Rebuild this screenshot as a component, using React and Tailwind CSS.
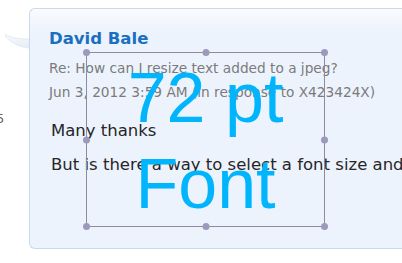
import React from "react";

function Handle({ className }) {
  return <div className={"absolute h-[7px] w-[7px] rounded-full bg-[#9d99bb] " + className} />;
}

export default function App() {
  return (
    <div className="flex h-[263px] w-[402px] overflow-hidden bg-white font-['DejaVu_Sans',sans-serif]">
      <div className="flex w-[29px] shrink-0 flex-col">
        <svg className="ml-[5px] mt-[33px]" width="24" height="16" viewBox="0 0 24 16">
          <defs>
            <linearGradient id="tg" x1="0" y1="0" x2="0" y2="1">
              <stop offset="0" stopColor="#f7fafd" />
              <stop offset="1" stopColor="#e4edf5" />
            </linearGradient>
          </defs>
          <path d="M0 1 C6 5 14 6 24 6 L24 15 C14 14 6 10 0 3 Z" fill="url(#tg)" stroke="#dde7f0" strokeWidth="0.8" />
        </svg>
        <div className="ml-[-4px] mt-[62px] text-[13px] leading-[16px] text-[#666]">5</div>
      </div>
      <div className="relative mt-[8px] h-[241px] w-[400px] shrink-0 rounded-l-[6px] border border-r-0 border-[#c9dbea] bg-[linear-gradient(to_bottom,#f9fbfe,#edf3fd_22px)] pl-[19px] pt-[20px]">
        <div className="text-[16.5px] font-bold leading-[20px] text-[#1a70c0]">David Bale</div>
        <div className="mt-[7px] whitespace-nowrap text-[13.7px] leading-[24px] text-[#7b7b7b]">
          Re: How can I resize text added to a jpeg?
        </div>
        <div className="whitespace-nowrap text-[13.7px] leading-[24px] text-[#7b7b7b]">
          Jun 3, 2012 3:59 AM (in response to X423424X)
        </div>
        <div className="ml-[2px] mt-[10px] whitespace-nowrap text-[16.5px] leading-[34px] text-[#262626]">Many thanks</div>
        <div className="ml-[2px] whitespace-nowrap text-[16.5px] leading-[34px] text-[#262626]">
          But is there a way to select a font size and
        </div>

        <div className="absolute left-[56px] top-[43px] h-[175px] w-[239px] border border-[#8e8b9f]">
          <div className="absolute inset-x-0 top-[2.4px] whitespace-nowrap text-center font-['Liberation_Sans',sans-serif] text-[70px] leading-[86px] text-[#00b5fc]">
            <div>72 pt</div>
            <div>Font</div>
          </div>
          <Handle className="-left-[4px] -top-[4px]" />
          <Handle className="left-1/2 -top-[4px] -translate-x-1/2" />
          <Handle className="-right-[4px] -top-[4px]" />
          <Handle className="-left-[4px] top-1/2 -translate-y-1/2" />
          <Handle className="-right-[4px] top-1/2 -translate-y-1/2" />
          <Handle className="-left-[4px] -bottom-[4px]" />
          <Handle className="left-1/2 -bottom-[4px] -translate-x-1/2" />
          <Handle className="-right-[4px] -bottom-[4px]" />
        </div>
      </div>
    </div>
  );
}
